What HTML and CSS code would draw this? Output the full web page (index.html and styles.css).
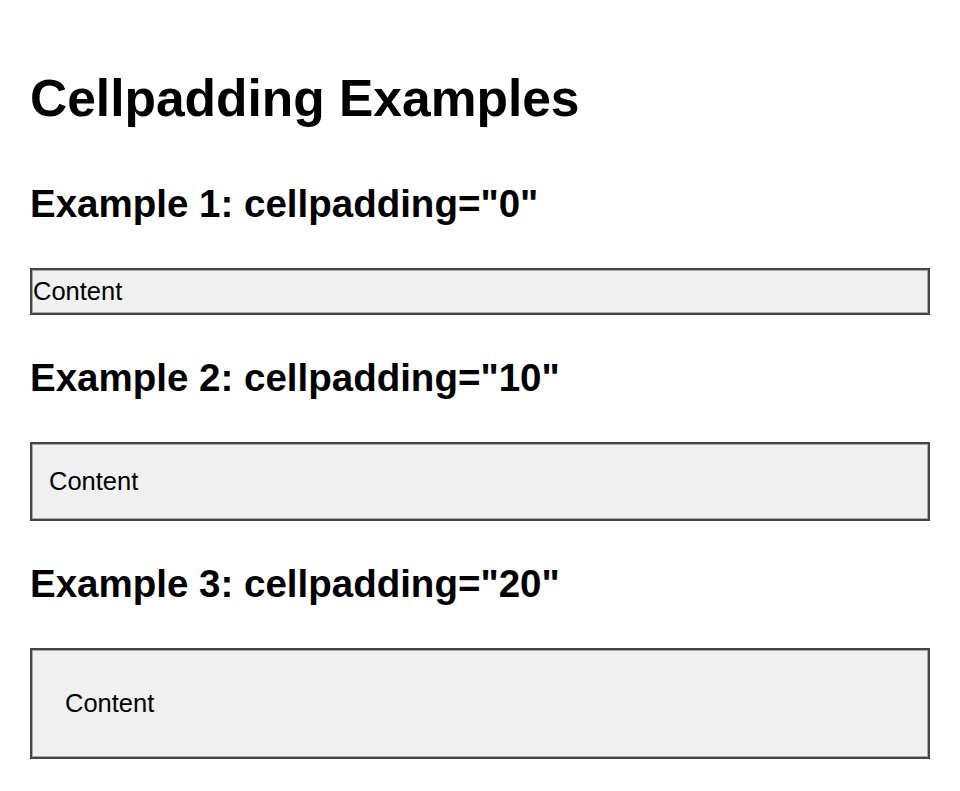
FILE: index.html
```html
<!DOCTYPE html>
<html lang="en">
<head>
    <meta charset="UTF-8">
    <meta name="viewport" content="width=device-width, initial-scale=1.0">
    <title>Cellpadding Examples</title>
    <link rel="stylesheet" href="styles.css">
</head>
<body>
    <h1>Cellpadding Examples</h1>

    <h2>Example 1: cellpadding="0"</h2>
    <table class="demo">
        <tr><td class="pad-0">Content</td></tr>
    </table>

    <h2>Example 2: cellpadding="10"</h2>
    <table class="demo">
        <tr><td class="pad-10">Content</td></tr>
    </table>

    <h2>Example 3: cellpadding="20"</h2>
    <table class="demo">
        <tr><td class="pad-20">Content</td></tr>
    </table>
</body>
</html>
```
FILE: styles.css
```css
body {
    font-family: "Liberation Sans", Arial, sans-serif;
    background-color: #FFFFFF;
    color: #000;
    margin: 0;
    padding: 0 30px;
}
h1 {
    font-size: 51.5px;
    line-height: 60px;
    margin: 68px 0 53px;
}
h2 {
    font-size: 38.5px;
    line-height: 45px;
    margin: 40px 0 42px;
}
.demo {
    width: 100%;
    border-collapse: separate;
    border-spacing: 0;
    border: 2px solid #444;
}
.demo td {
    border: 1px solid #a9a9a9;
    background-color: #f0f0f0;
    font-size: 25.5px;
    line-height: 41px;
    text-align: left;
}
.pad-0 {
    padding: 0;
}
.pad-10 {
    padding: 16px;
}
.pad-20 {
    padding: 32px;
}
```
